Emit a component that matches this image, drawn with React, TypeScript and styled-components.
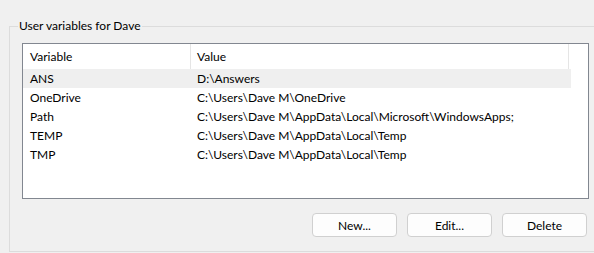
import styled, { createGlobalStyle } from "styled-components";

const Global = createGlobalStyle`
  html, body {
    margin: 0;
    padding: 0;
    background: #f0f0f0;
    overflow: hidden;
  }
  body {
    font-family: Lato, "Noto Sans", sans-serif;
    font-size: 12px;
    color: #000;
  }
`;

const Page = styled.div`
  width: 594px;
  height: 253px;
  padding-top: 26px;
  box-sizing: border-box;
`;

const Group = styled.div`
  position: relative;
  margin-left: 9px;
  width: 600px;
  height: 226px;
  box-sizing: border-box;
  border: 1px solid #dcdcdc;
  padding: 16px 0 0 12px;
`;

const Legend = styled.span`
  position: absolute;
  top: -9px;
  left: 8px;
  padding: 0 1px;
  background: #f0f0f0;
  line-height: 16px;
`;

const ListBox = styled.div`
  width: 567px;
  height: 156px;
  box-sizing: border-box;
  border: 1px solid #828790;
  background: #fff;
`;

const Columns = "168px 378px";

const Header = styled.div`
  display: grid;
  grid-template-columns: ${Columns};
  height: 25px;
`;

const HeaderCell = styled.div<{ $pad: number }>`
  display: flex;
  align-items: center;
  padding-left: ${(p) => p.$pad}px;
  border-right: 1px solid #e5e5e5;
`;

const Row = styled.div<{ $selected?: boolean }>`
  display: grid;
  grid-template-columns: ${Columns};
  height: 19px;
  align-items: center;
  background: ${(p) => (p.$selected ? "#efefef" : "transparent")};
  width: 548px;
`;

const Cell = styled.div<{ $pad: number }>`
  padding-left: ${(p) => p.$pad}px;
  white-space: nowrap;
  line-height: 19px;
`;

const ButtonBar = styled.div`
  display: flex;
  gap: 10px;
  margin-top: 14px;
  padding-left: 290px;
`;

const Button = styled.button`
  width: 85px;
  height: 24px;
  box-sizing: border-box;
  border: 1px solid #d0d0d0;
  border-radius: 4px;
  background: #fdfdfd;
  font-family: inherit;
  font-size: 12px;
  color: #000;
  padding: 0;
`;

const vars: [string, string][] = [
  ["ANS", "D:\\Answers"],
  ["OneDrive", "C:\\Users\\Dave M\\OneDrive"],
  ["Path", "C:\\Users\\Dave M\\AppData\\Local\\Microsoft\\WindowsApps;"],
  ["TEMP", "C:\\Users\\Dave M\\AppData\\Local\\Temp"],
  ["TMP", "C:\\Users\\Dave M\\AppData\\Local\\Temp"],
];

const App = () => {
  return (
    <>
      <Global />
      <Page>
        <Group>
          <Legend>User variables for Dave</Legend>
          <ListBox>
            <Header>
              <HeaderCell $pad={7}>Variable</HeaderCell>
              <HeaderCell $pad={6}>Value</HeaderCell>
            </Header>
            {vars.map(([name, value], i) => (
              <Row key={name} $selected={i === 0}>
                <Cell $pad={7}>{name}</Cell>
                <Cell $pad={6}>{value}</Cell>
              </Row>
            ))}
          </ListBox>
          <ButtonBar>
            <Button>New...</Button>
            <Button>Edit...</Button>
            <Button>Delete</Button>
          </ButtonBar>
        </Group>
      </Page>
    </>
  );
};

export default App;
